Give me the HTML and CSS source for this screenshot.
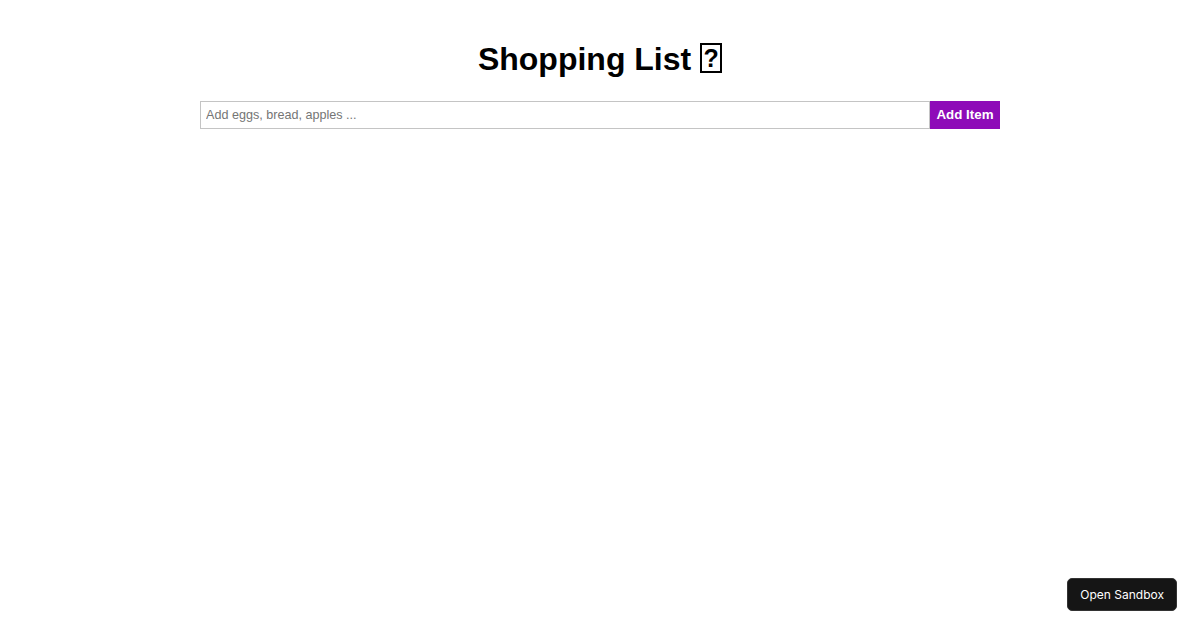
FILE: index.html
```html
<html lang="en"><head>
    <meta charset="UTF-8">
    <meta name="viewport" content="width=device-width, initial-scale=1.0">
    <title>Shopping List</title>
    <link rel="stylesheet" href="styles.css">
  </head>
  <body>
    <main class="app">
      <h1 class="title">Shopping List <span class="tofu">?</span></h1>
      <form class="add-form">
        <input class="add-input" type="text" placeholder="Add eggs, bread, apples ...">
        <button class="add-btn" type="submit">Add Item</button>
      </form>
      <ul class="list"></ul>
    </main>
    <a class="sandbox-btn" href="#">Open Sandbox</a>
  </body></html>
```

FILE: styles.css
```css
* {
    box-sizing: border-box;
}
body {
    margin: 0;
    font-family: 'Liberation Sans', Arial, sans-serif;
    background: #fff;
    color: #000;
}
.app {
    max-width: 800px;
    margin: 0 auto;
    padding-top: 41px;
}
.title {
    text-align: center;
    font-size: 32px;
    margin: 0 0 23px;
}
/* missing-glyph box */
.tofu {
    display: inline-block;
    overflow: hidden;
    width: 22px;
    height: 30px;
    border: 2px solid #000;
    font-size: 25px;
    line-height: 27px;
    text-align: center;
    vertical-align: -3px;
}
.add-form {
    display: flex;
    height: 28px;
}
.add-input {
    flex: 1;
    border: 1px solid #c4c4c4;
    padding: 0 5px 1px;
    font-family: inherit;
    font-size: 12.6px;
    outline: none;
}
.add-input::placeholder {
    color: #757575;
}
.add-btn {
    width: 70px;
    border: none;
    background: #8e0bb8;
    color: #fff;
    font-family: inherit;
    font-weight: 700;
    font-size: 13.33px;
    padding: 0 0 1px;
    cursor: pointer;
}
.list {
    list-style: none;
    padding: 0;
}
.sandbox-btn {
    position: fixed;
    right: 23px;
    bottom: 19px;
    background: #151515;
    color: #fff;
    font-family: Inter, sans-serif;
    font-size: 12px;
    text-decoration: none;
    padding: 8px 12px;
    border-radius: 5px;
    border: 1px solid #333;
}
```
